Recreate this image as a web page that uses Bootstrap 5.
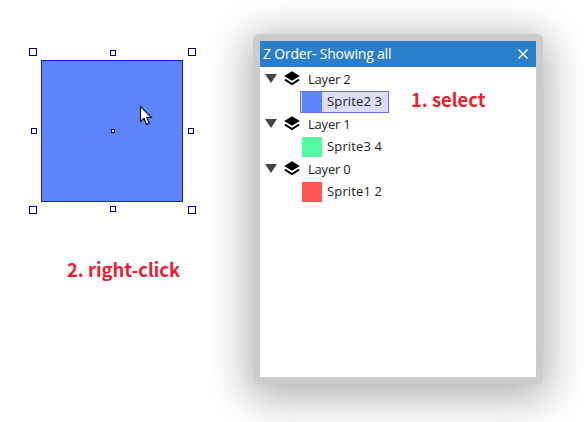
<!DOCTYPE html>
<html lang="en"><head><meta charset="utf-8"><title>Z Order</title>
<link href="https://cdn.jsdelivr.net/npm/bootstrap@5.3.0/dist/css/bootstrap.min.css" rel="stylesheet">
<style>
html,body{width:584px;height:422px;overflow:hidden;background:#fff;margin:0}
.stage{position:relative;width:584px;height:422px}
.shape{position:absolute;left:41px;top:60px;width:142px;height:142px;background:#5c85fa;border:1px solid #1a1ae6}
.hd{position:absolute;background:#fff;border:1.5px solid #000080;box-sizing:border-box}
.big{width:8px;height:8px}.mid{width:6px;height:6px}.dot{width:4px;height:4px;border-width:1px}
.ptr{position:absolute;left:139px;top:105px}
.note{position:absolute;color:#ee1c2e;font:700 18.4px/24px "Noto Sans CJK SC","Noto Sans",sans-serif;white-space:nowrap;z-index:2}
.zwin{position:absolute;left:253px;top:34px;width:290px;height:350px;background:#fff;border:7px solid #cbcbcb;border-radius:6px;box-shadow:0 8px 40px 6px rgba(0,0,0,.31);box-sizing:border-box;font-family:"Open Sans","Noto Sans",sans-serif;color:#222}
.ztitle{height:26px;background:#2a7fcc;color:#fff;font-size:14px;line-height:26px;padding:0 7px 0 3px;letter-spacing:-.2px}
.zclose{width:12px;height:12px}
.ztree{padding-top:1px}
.lrow{height:22.5px;padding-left:5px;font-size:13px;letter-spacing:-.2px}
.tri{width:0;height:0;border-left:6px solid transparent;border-right:6px solid transparent;border-top:9px solid #444;margin-top:-2px}
.licon{margin-left:7px;margin-right:8px;margin-top:-1px}
.srow{height:22.5px;padding-left:40px;font-size:13px;letter-spacing:.15px}
.sitem{height:22px;padding:0 5px 0 1px;border:1px solid transparent;gap:5px;width:89px;white-space:nowrap}
.sitem.sel{background:#dcdcfc;border-color:#6a6af6}
.swt{width:20px;height:20px}
</style></head>
<body>
<div class="stage">
  <div class="shape"></div>
  <span class="hd big" style="left:29px;top:48px"></span><span class="hd mid" style="left:110px;top:50px"></span><span class="hd big" style="left:188px;top:48px"></span>
  <span class="hd mid" style="left:31px;top:128px"></span><span class="hd dot" style="left:111px;top:129px"></span><span class="hd mid" style="left:188px;top:128px"></span>
  <span class="hd big" style="left:29px;top:206px"></span><span class="hd mid" style="left:110px;top:206px"></span><span class="hd big" style="left:188px;top:206px"></span>
  <svg class="ptr" width="16" height="22" viewBox="0 0 16 22"><path d="M1.500 1.500V16.500L5 13.300 7.600 19.500 10.300 18.400 7.800 12.500H12.500Z" fill="#fff" stroke="#0a0a20" stroke-width="1.100"/></svg>
  <div class="note" style="left:67px;top:257px">2. right-click</div>
  <div class="note" style="left:411px;top:87px">1. select</div>

  <div class="zwin">
    <div class="ztitle d-flex justify-content-between align-items-center">
      <span>Z Order- Showing all</span>
      <svg class="zclose" viewBox="0 0 12 12"><path d="M1.500 1.500 10.500 10.500M10.500 1.500 1.500 10.500" stroke="#fff" stroke-width="1.400" fill="none"/></svg>
    </div>
    <div class="ztree">
      <div class="lrow d-flex align-items-center"><span class="tri"></span>
        <svg class="licon" width="16" height="16" viewBox="0 0 16 16"><path d="M8 .3 15.800 5 8 9.700 .2 5Z" fill="#000"/><path d="M1 8.600 8 13 15 8.600" fill="none" stroke="#000" stroke-width="2"/></svg><span>Layer 2</span></div>
      <div class="srow d-flex align-items-center"><div class="sitem sel d-flex align-items-center"><span class="swt" style="background:#5c85fa"></span><span>Sprite2 3</span></div></div>
      <div class="lrow d-flex align-items-center"><span class="tri"></span>
        <svg class="licon" width="16" height="16" viewBox="0 0 16 16"><path d="M8 .3 15.800 5 8 9.700 .2 5Z" fill="#000"/><path d="M1 8.600 8 13 15 8.600" fill="none" stroke="#000" stroke-width="2"/></svg><span>Layer 1</span></div>
      <div class="srow d-flex align-items-center"><div class="sitem d-flex align-items-center"><span class="swt" style="background:#55f9a0"></span><span>Sprite3 4</span></div></div>
      <div class="lrow d-flex align-items-center"><span class="tri"></span>
        <svg class="licon" width="16" height="16" viewBox="0 0 16 16"><path d="M8 .3 15.800 5 8 9.700 .2 5Z" fill="#000"/><path d="M1 8.600 8 13 15 8.600" fill="none" stroke="#000" stroke-width="2"/></svg><span>Layer 0</span></div>
      <div class="srow d-flex align-items-center"><div class="sitem d-flex align-items-center"><span class="swt" style="background:#ff5555"></span><span>Sprite1 2</span></div></div>
    </div>
  </div>
</div>
<script src="https://cdn.jsdelivr.net/npm/bootstrap@5.3.0/dist/js/bootstrap.bundle.min.js"></script>
</body></html>
